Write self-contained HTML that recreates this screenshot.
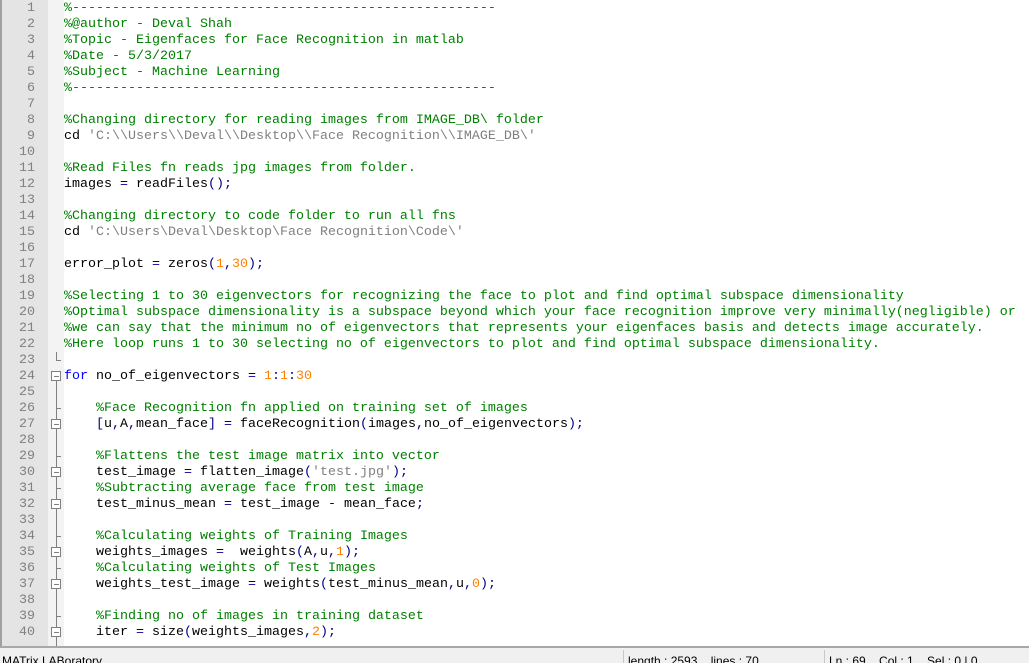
<!DOCTYPE html>
<html><head><meta charset="utf-8"><style>
html,body{margin:0;padding:0;width:1029px;height:663px;overflow:hidden;background:#fff;position:relative}
#gut{position:absolute;left:0;top:0;width:48px;height:646px;background:#e4e4e4;border-left:2px solid #a0a0a0;box-sizing:border-box}
#fold{position:absolute;left:48px;top:0;width:16px;height:646px;background:#f3f3f3}
.ln{position:absolute;left:0;width:35px;text-align:right;font:13.33px "Liberation Mono",monospace;color:#808080;height:16px;line-height:16px;margin-top:1px}
pre{position:absolute;left:64px;top:1px;margin:0;font:13.33px/16px "Liberation Mono",monospace;color:#000;white-space:pre}
.c{color:#008000}.s{color:#808080}.n{color:#ff8000}.k{color:#0000ff}.o{color:#000080}
.box{position:absolute;left:51px;width:8px;height:8px;border:1px solid #808080;background:#fff;box-sizing:content-box}
.box:after{content:"";position:absolute;left:2px;top:4px;width:5px;height:1px;background:#808080}
.vl{position:absolute;left:56px;width:1px;background:#808080}
.tk{position:absolute;left:56px;width:5px;height:1px;background:#808080}
#sb{position:absolute;left:0;top:646px;width:1029px;height:17px;background:#f0f0f0;border-top:2px solid #a8a8a8;box-sizing:border-box;font:12px "Liberation Sans",sans-serif;color:#000}
#sb span{position:absolute;top:6px;white-space:pre}
.sep{position:absolute;top:2px;width:1px;height:15px;background:#c8c8c8}
</style></head><body>
<div id="gut"></div><div id="fold"></div>
<div class="ln" style="top:0">1</div><div class="ln" style="top:16px">2</div><div class="ln" style="top:32px">3</div><div class="ln" style="top:48px">4</div><div class="ln" style="top:64px">5</div><div class="ln" style="top:80px">6</div><div class="ln" style="top:96px">7</div><div class="ln" style="top:112px">8</div><div class="ln" style="top:128px">9</div><div class="ln" style="top:144px">10</div><div class="ln" style="top:160px">11</div><div class="ln" style="top:176px">12</div><div class="ln" style="top:192px">13</div><div class="ln" style="top:208px">14</div><div class="ln" style="top:224px">15</div><div class="ln" style="top:240px">16</div><div class="ln" style="top:256px">17</div><div class="ln" style="top:272px">18</div><div class="ln" style="top:288px">19</div><div class="ln" style="top:304px">20</div><div class="ln" style="top:320px">21</div><div class="ln" style="top:336px">22</div><div class="ln" style="top:352px">23</div><div class="ln" style="top:368px">24</div><div class="ln" style="top:384px">25</div><div class="ln" style="top:400px">26</div><div class="ln" style="top:416px">27</div><div class="ln" style="top:432px">28</div><div class="ln" style="top:448px">29</div><div class="ln" style="top:464px">30</div><div class="ln" style="top:480px">31</div><div class="ln" style="top:496px">32</div><div class="ln" style="top:512px">33</div><div class="ln" style="top:528px">34</div><div class="ln" style="top:544px">35</div><div class="ln" style="top:560px">36</div><div class="ln" style="top:576px">37</div><div class="ln" style="top:592px">38</div><div class="ln" style="top:608px">39</div><div class="ln" style="top:624px">40</div>
<div class="vl" style="top:352px;height:8px"></div><div class="tk" style="top:360px"></div>
<div class="vl" style="top:380px;height:266px"></div>
<div class="box" style="top:371px"></div>
<div class="tk" style="top:408px"></div>
<div class="box" style="top:419px"></div>
<div class="tk" style="top:456px"></div>
<div class="box" style="top:467px"></div>
<div class="tk" style="top:488px"></div>
<div class="box" style="top:499px"></div>
<div class="tk" style="top:536px"></div>
<div class="box" style="top:547px"></div>
<div class="tk" style="top:568px"></div>
<div class="box" style="top:579px"></div>
<div class="tk" style="top:616px"></div>
<div class="box" style="top:627px"></div>
<pre><span class="c">%-----------------------------------------------------
%@author - Deval Shah
%Topic - Eigenfaces for Face Recognition in matlab
%Date - 5/3/2017
%Subject - Machine Learning
%-----------------------------------------------------</span>

<span class="c">%Changing directory for reading images from IMAGE_DB\ folder</span>
cd <span class="s">'C:\\Users\\Deval\\Desktop\\Face Recognition\\IMAGE_DB\'</span>

<span class="c">%Read Files fn reads jpg images from folder.</span>
images <span class="o">=</span> readFiles<span class="o">();</span>

<span class="c">%Changing directory to code folder to run all fns</span>
cd <span class="s">'C:\Users\Deval\Desktop\Face Recognition\Code\'</span>

error_plot <span class="o">=</span> zeros<span class="o">(</span><span class="n">1</span><span class="o">,</span><span class="n">30</span><span class="o">);</span>

<span class="c">%Selecting 1 to 30 eigenvectors for recognizing the face to plot and find optimal subspace dimensionality
%Optimal subspace dimensionality is a subspace beyond which your face recognition improve very minimally(negligible) or
%we can say that the minimum no of eigenvectors that represents your eigenfaces basis and detects image accurately.
%Here loop runs 1 to 30 selecting no of eigenvectors to plot and find optimal subspace dimensionality.</span>

<span class="k">for</span> no_of_eigenvectors <span class="o">=</span> <span class="n">1</span><span class="o">:</span><span class="n">1</span><span class="o">:</span><span class="n">30</span>

    <span class="c">%Face Recognition fn applied on training set of images</span>
    <span class="o">[</span>u<span class="o">,</span>A<span class="o">,</span>mean_face<span class="o">]</span> <span class="o">=</span> faceRecognition<span class="o">(</span>images<span class="o">,</span>no_of_eigenvectors<span class="o">);</span>

    <span class="c">%Flattens the test image matrix into vector</span>
    test_image <span class="o">=</span> flatten_image<span class="o">(</span><span class="s">'test.jpg'</span><span class="o">);</span>
    <span class="c">%Subtracting average face from test image</span>
    test_minus_mean <span class="o">=</span> test_image <span class="o">-</span> mean_face<span class="o">;</span>

    <span class="c">%Calculating weights of Training Images</span>
    weights_images <span class="o">=</span>  weights<span class="o">(</span>A<span class="o">,</span>u<span class="o">,</span><span class="n">1</span><span class="o">);</span>
    <span class="c">%Calculating weights of Test Images</span>
    weights_test_image <span class="o">=</span> weights<span class="o">(</span>test_minus_mean<span class="o">,</span>u<span class="o">,</span><span class="n">0</span><span class="o">);</span>

    <span class="c">%Finding no of images in training dataset</span>
    iter <span class="o">=</span> size<span class="o">(</span>weights_images<span class="o">,</span><span class="n">2</span><span class="o">);</span>
</pre>
<div id="sb">
<span style="left:2px">MATrix LABoratory</span>
<div class="sep" style="left:623px"></div>
<span style="left:628px">length : 2593    lines : 70</span>
<div class="sep" style="left:824px"></div>
<span style="left:829px">Ln : 69    Col : 1    Sel : 0 | 0</span>
</div>
</body></html>
